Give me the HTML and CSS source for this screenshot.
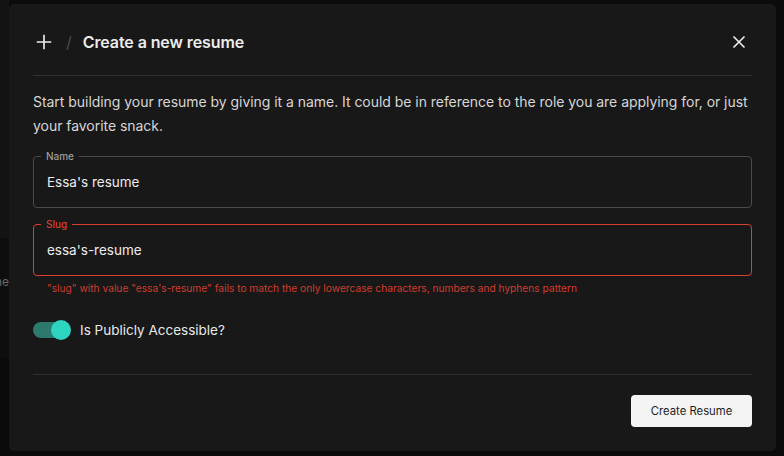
FILE: index.html
```html
<!DOCTYPE html>
<html lang="en">

<head>
  <title>Create a new resume</title>
  <meta charset="utf-8">
  <meta name="viewport" content="width=device-width, initial-scale=1">
  <link rel="stylesheet" href="styles.css">
</head>

<body>
  <div class="page">
    <!-- Dimmed app behind the dialog -->
    <div class="behind">
      <div class="behind-top"></div>
      <div class="behind-card"><span>Resume</span></div>
    </div>

    <!-- Dialog -->
    <div class="modal">
      <div class="modal-header">
        <svg class="icon-plus" width="22" height="22" viewBox="0 0 24 24" fill="none" stroke="currentColor" stroke-width="1.8" stroke-linecap="square">
          <path d="M12 5v14M5 12h14" />
        </svg>
        <span class="crumb-sep">/</span>
        <h2 class="modal-title">Create a new resume</h2>
        <button class="close-btn">
          <svg width="24" height="24" viewBox="0 0 24 24" fill="none" stroke="currentColor" stroke-width="1.6">
            <path d="M6.5 6.5l11 11M17.5 6.5l-11 11" />
          </svg>
        </button>
      </div>

      <p class="intro">Start building your resume by giving it a name. It could be in reference to the role you are applying for, or just your favorite snack.</p>

      <fieldset class="field">
        <legend>Name</legend>
        <div class="field-value">Essa's resume</div>
      </fieldset>

      <fieldset class="field error">
        <legend>Slug</legend>
        <div class="field-value">essa's-resume</div>
      </fieldset>
      <p class="field-error">"slug" with value "essa's-resume" fails to match the only lowercase characters, numbers and hyphens pattern</p>

      <div class="switch-row">
        <span class="switch-track"><span class="switch-knob"></span></span>
        <span class="switch-label">Is Publicly Accessible?</span>
      </div>

      <div class="modal-footer">
        <button class="primary-btn">Create Resume</button>
      </div>
    </div>
  </div>
</body>

</html>
```

FILE: styles.css
```css
* {
  box-sizing: border-box;
  font-family: Inter, 'Noto Sans', sans-serif;
}

body {
  margin: 0;
  background-color: #0b0b0b;
  color: #e6e6e6;
}

.page {
  display: flex;
  height: 456px;
  overflow: hidden;
}

/* Dimmed app behind */
.behind {
  width: 9px;
  flex-shrink: 0;
  display: flex;
  flex-direction: column;
}

.behind-top {
  height: 238px;
  background-color: #131313;
}

.behind-card {
  height: 120px;
  background-color: #0e0e0e;
  display: flex;
  justify-content: flex-end;
  padding-top: 36px;
  overflow: hidden;
  font-size: 12px;
  color: #6a6a6a;
}

/* Dialog */
.modal {
  width: 767px;
  height: 447px;
  margin-top: 4px;
  padding: 24px;
  background-color: #181818;
  border-radius: 5px;
}

.modal-header {
  display: flex;
  align-items: center;
  height: 48px;
  padding-bottom: 20px;
  border-bottom: 1px solid #2f2f2f;
}

.icon-plus {
  color: #ededed;
}

.crumb-sep {
  margin: 0 12px 0 11px;
  font-size: 16px;
  color: #4a4a4a;
}

.modal-title {
  flex: 1;
  margin: 0 0 0 -1px;
  font-size: 16px;
  font-weight: 600;
  letter-spacing: -0.1px;
  color: #ececec;
}

.close-btn {
  width: 24px;
  height: 24px;
  padding: 0;
  margin-right: 1px;
  border: none;
  background: transparent;
  color: #f0f0f0;
  cursor: pointer;
}

.intro {
  margin: 14px 0 0;
  font-size: 14px;
  line-height: 24px;
  letter-spacing: -0.04px;
  color: #d6d6d6;
}

/* Outlined text fields */
.field {
  margin: 12px 0 0;
  padding: 0 13px;
  border: 1px solid #4a4a4a;
  border-radius: 4px;
}

.field.error {
  margin-top: 10px;
  border-color: #d6402e;
}

.field legend {
  margin-left: -6px;
  padding: 0 5px;
  font-size: 10px;
  line-height: 12px;
  font-weight: 500;
  color: #9c9c9c;
}

.field.error legend {
  color: #d6402e;
}

.field-value {
  padding: 10px 0 15px;
  font-size: 13.5px;
  line-height: 20px;
  color: #ececec;
}

.field-error {
  margin: 5px 0 0 14px;
  font-size: 10.2px;
  line-height: 14px;
  color: #d13b2c;
}

/* Switch */
.switch-row {
  display: flex;
  align-items: center;
  height: 20px;
  margin-top: 25px;
}

.switch-track {
  display: flex;
  align-items: center;
  justify-content: flex-end;
  width: 33px;
  height: 16px;
  border-radius: 8px;
  background-color: #2c7a6d;
}

.switch-knob {
  width: 20px;
  height: 20px;
  margin-right: -5px;
  border-radius: 50%;
  background-color: #2dd4bf;
}

.switch-label {
  margin-left: 14px;
  font-size: 13.5px;
  color: #e8e8e8;
}

.modal-footer {
  display: flex;
  justify-content: flex-end;
  margin-top: 34px;
  padding-top: 20px;
  border-top: 1px solid #2f2f2f;
}

.primary-btn {
  width: 121px;
  height: 32px;
  border: none;
  border-radius: 4px;
  background-color: #f4f4f4;
  font-size: 11.3px;
  color: #1e1e1e;
  cursor: pointer;
}
```
